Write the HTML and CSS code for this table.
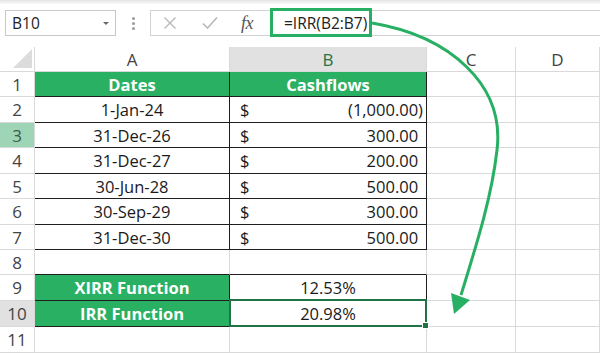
FILE: index.html
```html
<!DOCTYPE html>
<html>
<head>
<meta charset="utf-8">
<link rel="stylesheet" href="styles.css">
</head>
<body>
<div class="app">
  <div class="topstrip"></div>
  <div class="fbar">
    <div class="namebox"><span>B10</span><span class="dd"></span></div>
    <div class="sep"><i></i><i></i><i></i></div>
    <div class="formula">
      <div class="icons">
        <svg class="ic" width="16" height="12" viewBox="0 0 16 12"><path d="M2.5 0.5 L13.5 11.5 M13.5 0.5 L2.5 11.5" stroke="#b8b8b8" stroke-width="1.4" fill="none"/></svg>
        <svg class="ic" width="16" height="12" viewBox="0 0 16 12"><path d="M1 6.5 L5.5 11 L15 0.5" stroke="#b8b8b8" stroke-width="1.6" fill="none"/></svg>
        <span class="fx">fx</span>
      </div>
      <div class="input"><span class="hl">=IRR(B2:B7)</span></div>
    </div>
  </div>

  <div class="grid">
    <div class="c corner"><span class="tri"></span></div>
    <div class="c ch">A</div>
    <div class="c ch chsel">B</div>
    <div class="c ch">C</div>
    <div class="c ch">D</div>

    <div class="c rh">1</div>
    <div class="c t g b ctr">Dates</div>
    <div class="c t g b ctr">Cashflows</div>
    <div class="c"></div><div class="c"></div>

    <div class="c rh">2</div>
    <div class="c t ctr">1-Jan-24</div>
    <div class="c t acc"><span>$</span><span>(1,000.00)</span></div>
    <div class="c"></div><div class="c"></div>

    <div class="c rh rhg">3</div>
    <div class="c t ctr">31-Dec-26</div>
    <div class="c t acc"><span>$</span><span>300.00<span class="ph">)</span></span></div>
    <div class="c"></div><div class="c"></div>

    <div class="c rh">4</div>
    <div class="c t ctr">31-Dec-27</div>
    <div class="c t acc"><span>$</span><span>200.00<span class="ph">)</span></span></div>
    <div class="c"></div><div class="c"></div>

    <div class="c rh">5</div>
    <div class="c t ctr">30-Jun-28</div>
    <div class="c t acc"><span>$</span><span>500.00<span class="ph">)</span></span></div>
    <div class="c"></div><div class="c"></div>

    <div class="c rh">6</div>
    <div class="c t ctr">30-Sep-29</div>
    <div class="c t acc"><span>$</span><span>300.00<span class="ph">)</span></span></div>
    <div class="c"></div><div class="c"></div>

    <div class="c rh">7</div>
    <div class="c t ctr">31-Dec-30</div>
    <div class="c t acc"><span>$</span><span>500.00<span class="ph">)</span></span></div>
    <div class="c"></div><div class="c"></div>

    <div class="c rh">8</div>
    <div class="c bb"></div>
    <div class="c bb"></div>
    <div class="c"></div><div class="c"></div>

    <div class="c rh">9</div>
    <div class="c t g b ctr">XIRR Function</div>
    <div class="c t ctr">12.53%</div>
    <div class="c"></div><div class="c"></div>

    <div class="c rh rhs">10</div>
    <div class="c t g b ctr">IRR Function</div>
    <div class="c t ctr sel">20.98%<span class="handle"></span></div>
    <div class="c"></div><div class="c"></div>

    <div class="c rh">11</div>
    <div class="c"></div>
    <div class="c"></div>
    <div class="c"></div><div class="c"></div>
  </div>

  <svg class="arrow" width="600" height="354" viewBox="0 0 600 354">
    <path d="M372 23 C450 36 505 85 497 150 C492 195 478 240 461 295" stroke="#27b063" stroke-width="3" fill="none"/>
    <polygon points="454,314 451,293 470,300" fill="#27b063"/>
  </svg>
</div>
</body>
</html>
```

FILE: styles.css
```css
body {
  margin: 0;
  background: #fff;
  font-family: "Open Sans", "Noto Sans", sans-serif;
}

.app {
  position: relative;
  width: 600px;
  height: 354px;
  overflow: hidden;
  background: #fff;
}

.topstrip {
  height: 4px;
  background: linear-gradient(#e4e4e4, #f9f9f9);
}

.fbar {
  display: flex;
  height: 26px;
  margin-top: 6px;
}

.namebox {
  box-sizing: border-box;
  width: 111px;
  margin-left: 5px;
  border: 1px solid #c9c9c9;
  display: flex;
  align-items: center;
  justify-content: space-between;
  padding: 0 6px 0 6px;
  font-size: 15.5px;
  color: #222;
}

.dd {
  width: 0;
  height: 0;
  border-left: 3.5px solid transparent;
  border-right: 3.5px solid transparent;
  border-top: 3.5px solid #666;
  margin-top: 1px;
}

.sep {
  width: 34px;
  display: flex;
  flex-direction: column;
  align-items: center;
  justify-content: center;
  gap: 2px;
}

.sep i {
  display: block;
  width: 3px;
  height: 3px;
  border-radius: 50%;
  background: #9a9a9a;
}

.formula {
  flex: 1;
  display: flex;
  box-sizing: border-box;
  border: 1px solid #d2d2d2;
  border-right: 0;
}

.icons {
  width: 119px;
  display: flex;
  align-items: center;
  padding-left: 11px;
  box-sizing: border-box;
}

.ic {
  display: block;
}

.icons .ic:nth-child(2) {
  margin-left: 24px;
}

.fx {
  margin-left: 23px;
  font-family: "Liberation Serif", serif;
  font-style: italic;
  font-size: 18px;
  color: #555;
  letter-spacing: -0.5px;
}

.input {
  flex: 1;
  display: flex;
  border-left: 1px solid #d2d2d2;
}

.hl {
  box-sizing: border-box;
  width: 102px;
  height: 29px;
  margin: -3px 0 0 -1px;
  border: 3px solid #27b063;
  display: flex;
  align-items: center;
  padding-left: 11px;
  font-size: 15.5px;
  color: #222;
  white-space: nowrap;
}

.grid {
  margin-top: 11px;
  display: grid;
  grid-template-columns: 35px 195px 197px 89px 84px;
  grid-template-rows: 25px 25px 26px 25px 26px 25px 26px 25px 25px 26px 26px 26px;
}

.c {
  box-sizing: border-box;
  border-right: 1px solid #d9d9d9;
  border-bottom: 1px solid #d9d9d9;
  display: flex;
  align-items: center;
  font-size: 16.5px;
  color: #1a1a1a;
  white-space: nowrap;
}

.corner {
  position: relative;
}

.tri {
  position: absolute;
  right: 2px;
  bottom: 3px;
  width: 0;
  height: 0;
  border-left: 19px solid transparent;
  border-bottom: 19px solid #dcdcdc;
}

.ch {
  justify-content: center;
  font-size: 17px;
  color: #444;
}

.chsel {
  background: #e1e1e1;
  color: #217346;
}

.rh {
  justify-content: center;
  font-size: 17px;
  color: #444;
}

.rhg {
  background: #9fd5b7;
  color: #3c5a48;
}

.rhs {
  background: #e1e1e1;
}

.t {
  border-right-color: #1e1e1e;
  border-bottom-color: #1e1e1e;
}

.bb {
  border-bottom-color: #1e1e1e;
}

.g {
  background: #29b062;
  color: #fff;
}

.b {
  font-weight: 700;
}

.ctr {
  justify-content: center;
}

.acc {
  justify-content: space-between;
  padding: 0 3px 0 10px;
}

.ph {
  visibility: hidden;
}

.sel {
  position: relative;
}

.sel::after {
  content: "";
  position: absolute;
  left: -1px;
  top: -2px;
  right: -1px;
  bottom: -1px;
  border: 2px solid #217346;
}

.handle {
  position: absolute;
  right: -3px;
  bottom: -3px;
  width: 5px;
  height: 5px;
  background: #217346;
  border: 1px solid #fff;
  z-index: 2;
}

.arrow {
  position: absolute;
  left: 0;
  top: 0;
  pointer-events: none;
}
```
